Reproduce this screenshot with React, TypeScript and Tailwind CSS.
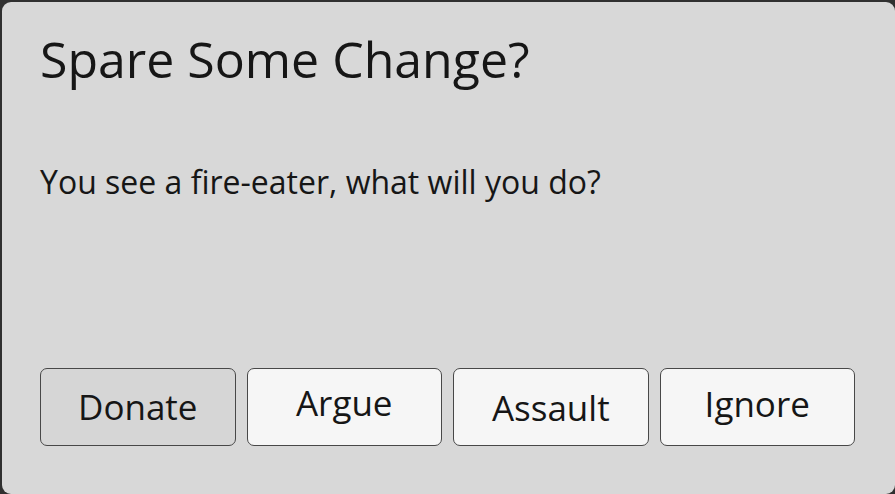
export default function App() {
  const buttons = [
    { label: "Donate", cls: "bg-[#d6d6d6] pb-[2px]" },
    { label: "Argue", cls: "bg-[#f6f6f6] pb-[10px]" },
    { label: "Assault", cls: "bg-[#f6f6f6] pb-0" },
    { label: "Ignore", cls: "bg-[#f6f6f6] pb-[8px]" },
  ];

  return (
    <div className="h-[494px] w-[895px] overflow-hidden bg-[#303030] pl-[2px] pt-[2px]">
      <div
        className="flex h-[492px] w-[893px] flex-col rounded-[9px] bg-[#d8d8d8] pl-[38px] pr-[40px] pt-[32px] pb-[48px] text-[#161616]"
        style={{ fontFamily: '"Open Sans", "Noto Sans", sans-serif' }}
      >
        <h1 className="text-[50px] leading-none font-normal">Spare Some Change?</h1>
        <p className="mt-[82px] text-[32px] leading-none">You see a fire-eater, what will you do?</p>

        <div className="mt-auto grid grid-cols-4 gap-[11px]">
          {buttons.map((b) => (
            <button
              key={b.label}
              type="button"
              className={`flex h-[78px] items-center justify-center rounded-[7px] border border-[#484848] text-[35px] leading-none text-[#161616] ${b.cls}`}
            >
              {b.label}
            </button>
          ))}
        </div>
      </div>
    </div>
  );
}
